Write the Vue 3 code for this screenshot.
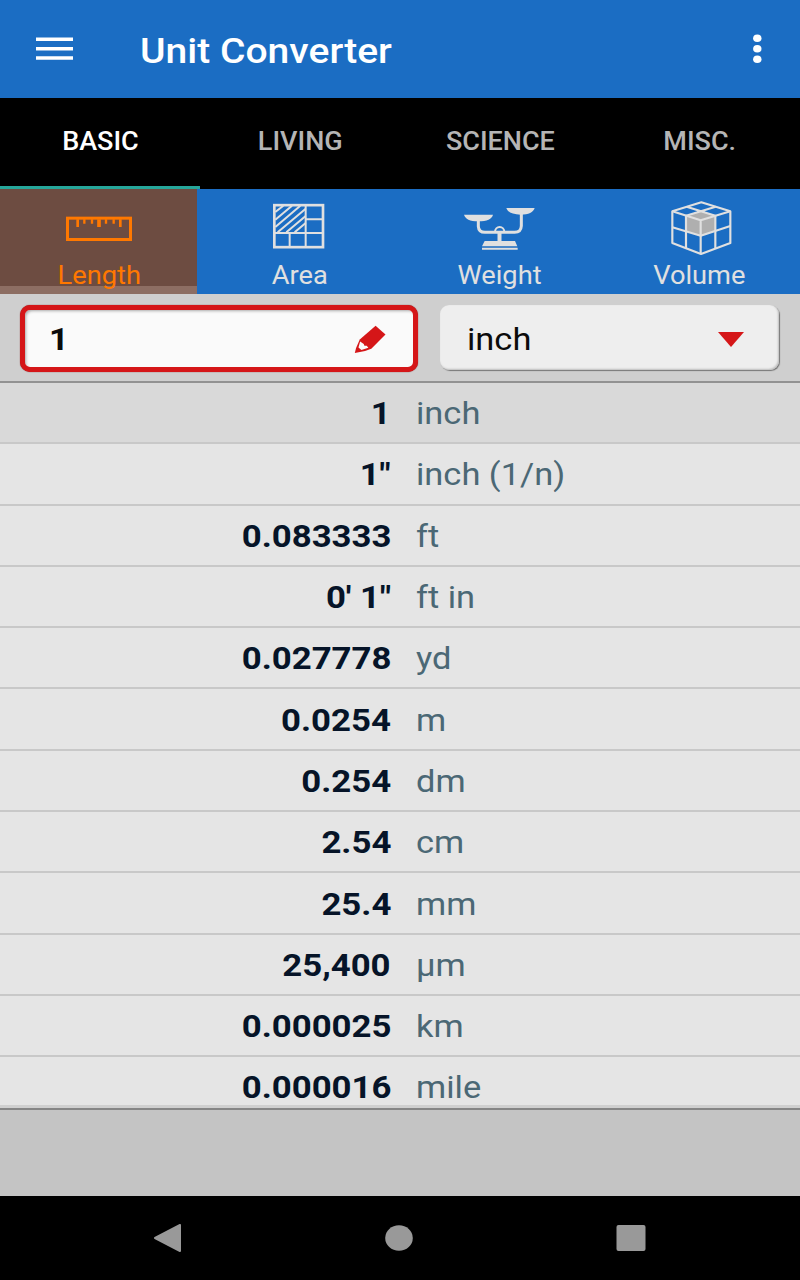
<template>
  <div class="app">
    <header class="toolbar">
      <svg class="menu" viewBox="0 0 38 24">
        <path d="M0 2H38M0 11.7H38M0 21.3H38" stroke="#fff" stroke-width="3.6" />
      </svg>
      <h1><span class="wide">Unit Converter</span></h1>
      <svg class="more" viewBox="0 0 10 30">
        <ellipse cx="5.3" cy="4.2" rx="4.2" ry="3.8" />
        <ellipse cx="5.3" cy="14.8" rx="4.2" ry="3.8" />
        <ellipse cx="5.3" cy="25.3" rx="4.2" ry="3.8" />
      </svg>
    </header>

    <nav class="tabs">
      <button
        v-for="tab in tabs"
        :key="tab"
        class="tab"
        :class="{ active: tab === currentTab }"
        @click="currentTab = tab"
      >
        <span class="wide">{{ tab }}</span>
      </button>
    </nav>

    <nav class="kinds">
      <button
        v-for="kind in kinds"
        :key="kind"
        class="kind"
        :class="{ active: kind === currentKind }"
        @click="currentKind = kind"
      >
        <svg class="icon" viewBox="150 48 300 180" fill="none" stroke="currentColor">
          <g v-if="kind === 'Length'">
            <rect x="202.500" y="114.500" width="189" height="64" stroke-width="9" />
            <path d="M233 118V141M361 118V141" stroke-width="8" />
            <path d="M253 118V131M276 118V131M318 118V131M341 118V131" stroke-width="7" />
            <path d="M297 118V141" stroke-width="11" />
          </g>
          <g v-else-if="kind === 'Area'">
            <rect x="223" y="75.500" width="146" height="126" stroke-width="8" />
            <path d="M317 76V201M223 159H369M317 118H369M269 159V201" stroke-width="6" />
            <path
              d="M226 96L250 77M226 119L276 77M226 141L301 77M233 157L317 86M259 157L317 108M284 157L317 129"
              stroke-width="6"
            />
          </g>
          <g v-else-if="kind === 'Weight'">
            <path
              d="M192 104H279C276 117 261 124 235 124S196 117 192 104ZM319 84H404C400 97 386 104 362 104S323 97 319 84Z"
              fill="currentColor"
              stroke="none"
            />
            <path d="M235 122V139Q236 157 255 157H344Q363 157 364 138V102" stroke-width="9" />
            <path d="M285 156A14 15 0 0 1 313 156" stroke-width="6" />
            <path d="M298.500 158V185" stroke-width="12" />
            <path d="M254 183H345L352 199H246Z" fill="currentColor" stroke="none" />
            <path d="M246 206H353" stroke-width="6" />
          </g>
          <g v-else stroke-width="6.5" stroke-linejoin="round">
            <path d="M258 107L303 94L346 107V154L302 167L258 154Z" fill="#afafaf" stroke="none" />
            <path d="M304 67L391 94V189L303 222L217 189V94Z" />
            <path d="M217 94L302 121L391 94M302 121V222" />
            <path d="M260 80L346 107V204M347 80L258 107V206" />
            <path d="M217 142L302 167L391 138" />
          </g>
        </svg>
        <span class="wide">{{ kind }}</span>
      </button>
    </nav>

    <section class="entry">
      <div class="amount">
        <span class="wide">{{ amount }}</span>
        <svg class="pencil" viewBox="0 0 96 88">
          <path d="M65 2L95 29L52 72L33 79L2 85L6 69L17 44Z" fill="#d51618" />
          <path d="M18 50L13 68L22 76L43 69L38 63L31 63L29 58Z" fill="#fafafa" />
        </svg>
      </div>
      <div class="unit-select">
        <span class="wide">{{ unit }}</span>
        <svg class="caret" viewBox="0 0 26 15"><path d="M0 0H26L13 15Z" fill="#d51618" /></svg>
      </div>
    </section>

    <ul class="results">
      <li v-for="row in results" :key="row.unit" :class="{ selected: row.unit === unit }">
        <b class="wide">{{ row.value }}</b>
        <span class="wide">{{ row.unit }}</span>
      </li>
    </ul>

    <div class="ad"></div>

    <footer class="system">
      <svg viewBox="0 0 28 28">
        <path d="M1 14L26 1V27Z" fill="#999" stroke="#999" stroke-width="2" stroke-linejoin="round" />
      </svg>
      <svg viewBox="0 0 28 28"><ellipse cx="14" cy="14" rx="13.800" ry="12.800" fill="#999" /></svg>
      <svg viewBox="0 0 30 28"><rect x="0.500" y="1" width="29" height="26" rx="2" fill="#999" /></svg>
    </footer>
  </div>
</template>

<script setup>
import { ref } from 'vue'

const tabs = ['BASIC', 'LIVING', 'SCIENCE', 'MISC.']
const kinds = ['Length', 'Area', 'Weight', 'Volume']

const currentTab = ref('BASIC')
const currentKind = ref('Length')
const amount = ref('1')
const unit = ref('inch')

const results = [
  { value: '1', unit: 'inch' },
  { value: '1"', unit: 'inch (1/n)' },
  { value: '0.083333', unit: 'ft' },
  { value: '0\' 1"', unit: 'ft in' },
  { value: '0.027778', unit: 'yd' },
  { value: '0.0254', unit: 'm' },
  { value: '0.254', unit: 'dm' },
  { value: '2.54', unit: 'cm' },
  { value: '25.4', unit: 'mm' },
  { value: '25,400', unit: 'µm' },
  { value: '0.000025', unit: 'km' },
  { value: '0.000016', unit: 'mile' }
]
</script>

<style>
body {
  margin: 0;
  background: #000;
}
</style>

<style scoped>
.app {
  display: flex;
  flex-direction: column;
  width: 800px;
  height: 1280px;
  overflow: hidden;
  font-family: Roboto, sans-serif;
}

button {
  padding: 0;
  border: none;
  background: none;
  font-family: inherit;
  cursor: pointer;
}

/* the type is set slightly wider than normal */
.wide {
  display: inline-block;
  white-space: pre;
  transform: scaleX(1.11);
}

.toolbar {
  display: flex;
  align-items: center;
  box-sizing: border-box;
  flex: 0 0 98px;
  padding: 0 38px 0 35.500px;
  background: #1b6dc3;
}

.menu {
  width: 37px;
  height: 24px;
}

.toolbar h1 {
  flex: 1;
  margin: 4px 0 0 67.500px;
  color: #fff;
  font-size: 35.500px;
  font-weight: 500;
}

.toolbar .wide {
  transform: scaleX(1.1);
}

.toolbar .wide,
.entry .wide,
.results span {
  transform-origin: left;
}

.more {
  width: 10px;
  height: 30px;
  fill: #fff;
}

.tabs {
  display: grid;
  grid-template-columns: repeat(4, 1fr);
  flex: 0 0 91px;
  background: #000;
}

.tab {
  padding-bottom: 2px;
  border-bottom: 3px solid transparent;
  color: #b5b5b5;
  font-size: 25px;
  font-weight: 500;
}

.tab .wide {
  transform: scaleX(1.08);
}

.tab.active {
  border-color: #26a69a;
  color: #fff;
}

.kinds {
  display: grid;
  grid-template-columns: repeat(4, 1fr);
  flex: 0 0 105px;
  background: #1b6dc3;
}

.kind {
  display: flex;
  flex-direction: column;
  align-items: center;
  padding-top: 7px;
  color: #e0e0e0;
  font-size: 25px;
  line-height: 30px;
}

.kind .wide {
  position: relative;
  left: -0.500px;
  transform: scaleX(1.09);
}

.kind.active {
  background: linear-gradient(#6d4c41 97px, #8d6e63 97px) no-repeat;
  background-size: 197px 105px;
  color: #ff7800;
}

.icon {
  width: 100px;
  height: 60px;
  margin-bottom: 5px;
}

.entry {
  display: flex;
  box-sizing: border-box;
  flex: 0 0 89px;
  gap: 22px;
  padding: 11px 20px 0;
  border-bottom: 2px solid #929292;
  background: #cfcfcf;
}

.amount,
.unit-select {
  display: flex;
  align-items: center;
  justify-content: space-between;
  box-sizing: border-box;
  color: #0b0b0b;
  font-size: 31px;
}

.amount {
  width: 398px;
  height: 67px;
  padding: 2px 27px 0 24px;
  border: 5px solid #d51618;
  border-radius: 10px;
  background: #fafafa;
  box-shadow: 0 0 1px #700, inset 2px 2px 3px -1px #aaa;
  font-weight: 700;
}

.unit-select {
  width: 339px;
  height: 65px;
  padding: 3px 35px 0 27px;
  border-radius: 9px;
  background: #eee;
  box-shadow: 1px 1px 1px #777, inset -1px -1px 2px #bbb;
}

.pencil {
  width: 32px;
  height: 29px;
}

.caret {
  width: 26px;
  height: 15px;
}

.results {
  flex: 0 0 725px;
  box-sizing: border-box;
  margin: 0;
  padding: 0;
  overflow: hidden;
  border-bottom: 3px solid #cfcfcf;
  background: #e5e5e5;
  list-style: none;
}

.results li {
  display: grid;
  grid-template-columns: 391px 1fr;
  column-gap: 25px;
  align-items: center;
  box-sizing: border-box;
  height: 61.300px;
  padding-top: 2px;
  border-bottom: 2px solid #c8c8c8;
  font-size: 31px;
}

.results li.selected {
  background: #d9d9d9;
}

.results b {
  justify-self: end;
  color: #061428;
  transform: scaleX(1.122);
  transform-origin: right;
}

.results span {
  justify-self: start;
  color: #4b6875;
}

.ad {
  box-sizing: border-box;
  flex: 0 0 88px;
  border-top: 2px solid #858585;
  background: #c4c4c4;
}

.system {
  display: flex;
  align-items: center;
  justify-content: space-between;
  box-sizing: border-box;
  flex: 0 0 84px;
  padding: 0 154.500px 0 152.500px;
  background: #000;
}

.system svg {
  width: 30px;
  height: 28px;
}
</style>
